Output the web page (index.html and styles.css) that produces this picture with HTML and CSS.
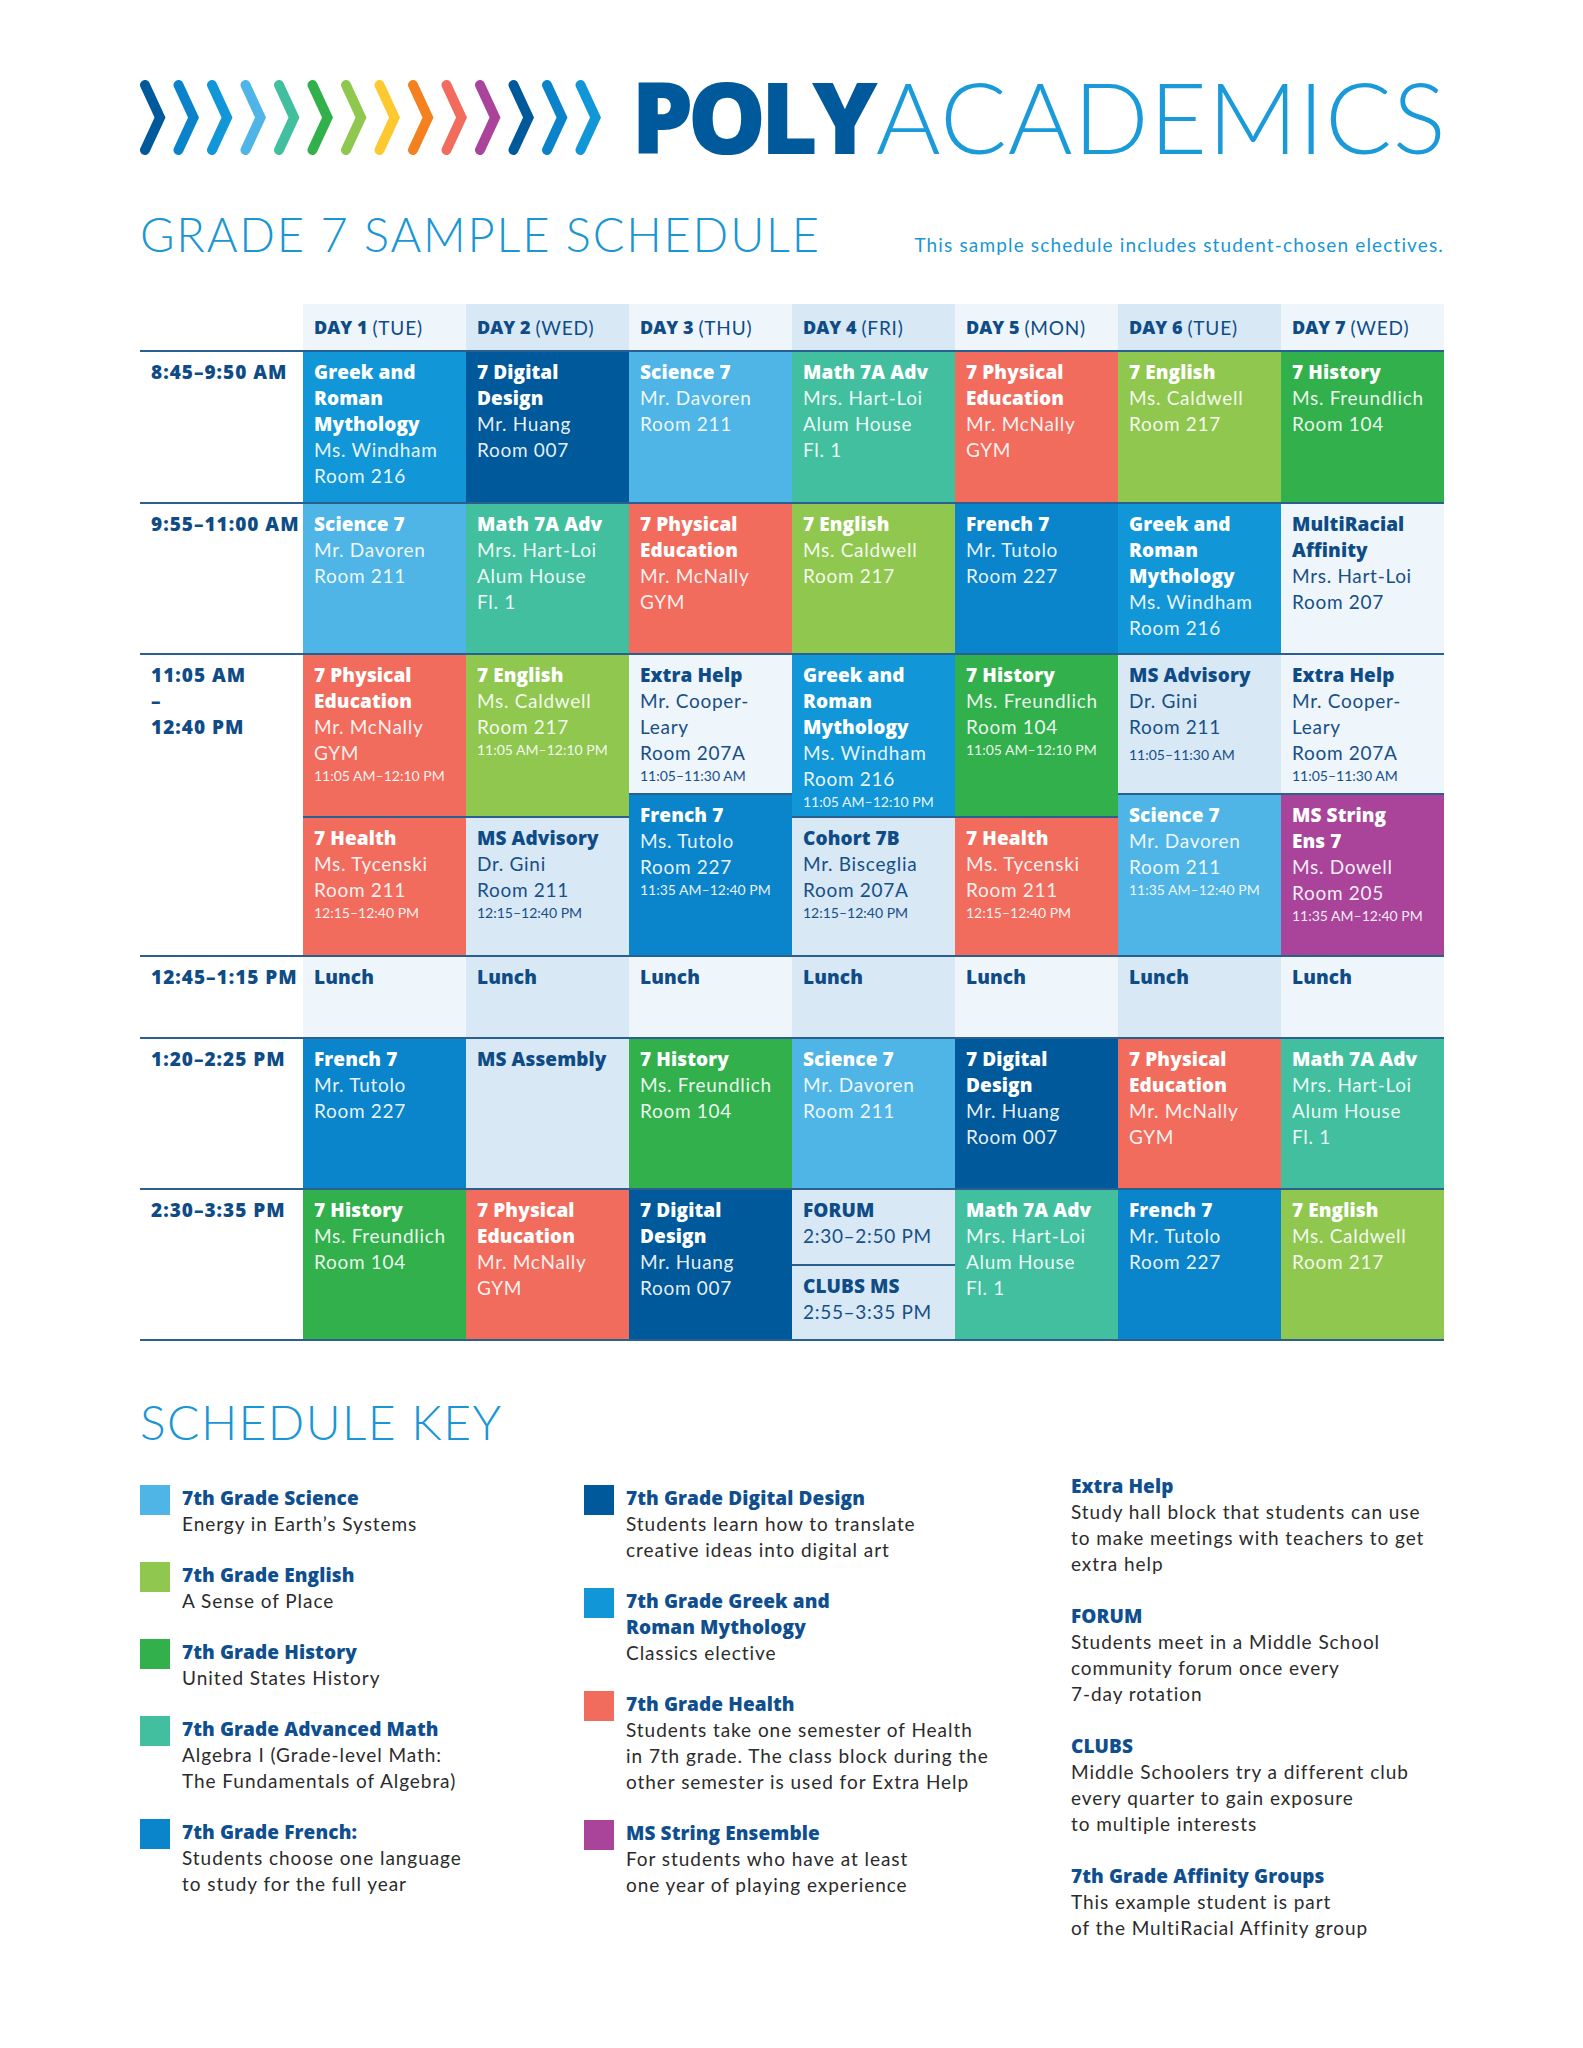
FILE: index.html
```html
<!DOCTYPE html>
<html lang="en">
<head>
<meta charset="utf-8">
<title>Poly Academics – Grade 7 Sample Schedule</title>
<link rel="stylesheet" href="styles.css">
</head>
<body>
<div class="page">
  <header class="logo">
    <svg class="chev" viewBox="0 0 470 75" width="470" height="75" aria-hidden="true">
      <g fill="none" stroke-width="10" stroke-linecap="round" stroke-linejoin="miter">
        <path d="M5 5 L20 37.5 L5 70" stroke="#00599b"/>
        <path d="M38.5 5 L53.5 37.5 L38.5 70" stroke="#0a83ca"/>
        <path d="M72 5 L87 37.5 L72 70" stroke="#1197d8"/>
        <path d="M105.5 5 L120.5 37.5 L105.5 70" stroke="#4eb5e6"/>
        <path d="M139 5 L154 37.5 L139 70" stroke="#42bf9f"/>
        <path d="M172.5 5 L187.5 37.5 L172.5 70" stroke="#31b04b"/>
        <path d="M206 5 L221 37.5 L206 70" stroke="#8fc74f"/>
        <path d="M239.5 5 L254.5 37.5 L239.5 70" stroke="#fcc931"/>
        <path d="M273 5 L288 37.5 L273 70" stroke="#f48120"/>
        <path d="M306.5 5 L321.5 37.5 L306.5 70" stroke="#f26c5e"/>
        <path d="M340 5 L355 37.5 L340 70" stroke="#a9449a"/>
        <path d="M373.5 5 L388.5 37.5 L373.5 70" stroke="#00599b"/>
        <path d="M407 5 L422 37.5 L407 70" stroke="#0a83ca"/>
        <path d="M440.5 5 L455.5 37.5 L440.5 70" stroke="#1197d8"/>
      </g>
    </svg>
    <div class="wordmark"><span class="poly">POLY</span><span class="acad">ACADEMICS</span></div>
  </header>

  <div class="title-row">
    <h1>GRADE 7 SAMPLE SCHEDULE</h1>
    <p>This sample schedule includes student-chosen electives.</p>
  </div>

  <div class="sched">
    <div class="row head">
      <div class="time"></div>
      <div class="hd odd"><b>DAY 1</b> (TUE)</div>
      <div class="hd even"><b>DAY 2</b> (WED)</div>
      <div class="hd odd"><b>DAY 3</b> (THU)</div>
      <div class="hd even"><b>DAY 4</b> (FRI)</div>
      <div class="hd odd"><b>DAY 5</b> (MON)</div>
      <div class="hd even"><b>DAY 6</b> (TUE)</div>
      <div class="hd odd"><b>DAY 7</b> (WED)</div>
    </div>

    <div class="row r-std r1">
      <div class="time">8:45–9:50 AM</div>
      <div class="cell greek"><b>Greek and<br>Roman<br>Mythology</b><span>Ms. Windham</span><span>Room 216</span></div>
      <div class="cell dd"><b>7 Digital<br>Design</b><span>Mr. Huang</span><span>Room 007</span></div>
      <div class="cell sci"><b>Science 7</b><span>Mr. Davoren</span><span>Room 211</span></div>
      <div class="cell math"><b>Math 7A Adv</b><span>Mrs. Hart-Loi</span><span>Alum House</span><span>Fl. 1</span></div>
      <div class="cell pe"><b>7 Physical<br>Education</b><span>Mr. McNally</span><span>GYM</span></div>
      <div class="cell eng"><b>7 English</b><span>Ms. Caldwell</span><span>Room 217</span></div>
      <div class="cell hist"><b>7 History</b><span>Ms. Freundlich</span><span>Room 104</span></div>
    </div>

    <div class="row r-std r2">
      <div class="time">9:55–11:00 AM</div>
      <div class="cell sci"><b>Science 7</b><span>Mr. Davoren</span><span>Room 211</span></div>
      <div class="cell math"><b>Math 7A Adv</b><span>Mrs. Hart-Loi</span><span>Alum House</span><span>Fl. 1</span></div>
      <div class="cell pe"><b>7 Physical<br>Education</b><span>Mr. McNally</span><span>GYM</span></div>
      <div class="cell eng"><b>7 English</b><span>Ms. Caldwell</span><span>Room 217</span></div>
      <div class="cell fr"><b>French 7</b><span>Mr. Tutolo</span><span>Room 227</span></div>
      <div class="cell greek"><b>Greek and<br>Roman<br>Mythology</b><span>Ms. Windham</span><span>Room 216</span></div>
      <div class="cell odd"><b>MultiRacial<br>Affinity</b><span>Mrs. Hart-Loi</span><span>Room 207</span></div>
    </div>

    <div class="row r3">
      <div class="time">11:05 AM<br>–<br>12:40 PM</div>
      <div class="split long">
        <div class="cell pe"><b>7 Physical<br>Education</b><span>Mr. McNally</span><span>GYM</span><small>11:05 AM–12:10 PM</small></div>
        <div class="cell pe"><b>7 Health</b><span>Ms. Tycenski</span><span>Room 211</span><small>12:15–12:40 PM</small></div>
      </div>
      <div class="split long">
        <div class="cell eng"><b>7 English</b><span>Ms. Caldwell</span><span>Room 217</span><small>11:05 AM–12:10 PM</small></div>
        <div class="cell even"><b>MS Advisory</b><span>Dr. Gini</span><span>Room 211</span><small>12:15–12:40 PM</small></div>
      </div>
      <div class="split short">
        <div class="cell odd"><b>Extra Help</b><span>Mr. Cooper-</span><span>Leary</span><span>Room 207A</span><small>11:05–11:30 AM</small></div>
        <div class="cell fr"><b>French 7</b><span>Ms. Tutolo</span><span>Room 227</span><small>11:35 AM–12:40 PM</small></div>
      </div>
      <div class="split long">
        <div class="cell greek"><b>Greek and<br>Roman<br>Mythology</b><span>Ms. Windham</span><span>Room 216</span><small>11:05 AM–12:10 PM</small></div>
        <div class="cell even"><b>Cohort 7B</b><span>Mr. Bisceglia</span><span>Room 207A</span><small>12:15–12:40 PM</small></div>
      </div>
      <div class="split long">
        <div class="cell hist"><b>7 History</b><span>Ms. Freundlich</span><span>Room 104</span><small>11:05 AM–12:10 PM</small></div>
        <div class="cell pe"><b>7 Health</b><span>Ms. Tycenski</span><span>Room 211</span><small>12:15–12:40 PM</small></div>
      </div>
      <div class="split short">
        <div class="cell even"><b>MS Advisory</b><span>Dr. Gini</span><span>Room 211</span><small class="gap">11:05–11:30 AM</small></div>
        <div class="cell sci"><b>Science 7</b><span>Mr. Davoren</span><span>Room 211</span><small>11:35 AM–12:40 PM</small></div>
      </div>
      <div class="split short">
        <div class="cell odd"><b>Extra Help</b><span>Mr. Cooper-</span><span>Leary</span><span>Room 207A</span><small>11:05–11:30 AM</small></div>
        <div class="cell str"><b>MS String<br>Ens 7</b><span>Ms. Dowell</span><span>Room 205</span><small>11:35 AM–12:40 PM</small></div>
      </div>
    </div>

    <div class="row lunch">
      <div class="time">12:45–1:15 PM</div>
      <div class="cell odd"><b>Lunch</b></div>
      <div class="cell even"><b>Lunch</b></div>
      <div class="cell odd"><b>Lunch</b></div>
      <div class="cell even"><b>Lunch</b></div>
      <div class="cell odd"><b>Lunch</b></div>
      <div class="cell even"><b>Lunch</b></div>
      <div class="cell odd"><b>Lunch</b></div>
    </div>

    <div class="row r-std r5">
      <div class="time">1:20–2:25 PM</div>
      <div class="cell fr"><b>French 7</b><span>Mr. Tutolo</span><span>Room 227</span></div>
      <div class="cell even"><b>MS Assembly</b></div>
      <div class="cell hist"><b>7 History</b><span>Ms. Freundlich</span><span>Room 104</span></div>
      <div class="cell sci"><b>Science 7</b><span>Mr. Davoren</span><span>Room 211</span></div>
      <div class="cell dd"><b>7 Digital<br>Design</b><span>Mr. Huang</span><span>Room 007</span></div>
      <div class="cell pe"><b>7 Physical<br>Education</b><span>Mr. McNally</span><span>GYM</span></div>
      <div class="cell math"><b>Math 7A Adv</b><span>Mrs. Hart-Loi</span><span>Alum House</span><span>Fl. 1</span></div>
    </div>

    <div class="row r-std r6">
      <div class="time">2:30–3:35 PM</div>
      <div class="cell hist"><b>7 History</b><span>Ms. Freundlich</span><span>Room 104</span></div>
      <div class="cell pe"><b>7 Physical<br>Education</b><span>Mr. McNally</span><span>GYM</span></div>
      <div class="cell dd"><b>7 Digital<br>Design</b><span>Mr. Huang</span><span>Room 007</span></div>
      <div class="split half">
        <div class="cell even"><b>FORUM</b><span>2:30–2:50 PM</span></div>
        <div class="cell even"><b>CLUBS MS</b><span>2:55–3:35 PM</span></div>
      </div>
      <div class="cell math"><b>Math 7A Adv</b><span>Mrs. Hart-Loi</span><span>Alum House</span><span>Fl. 1</span></div>
      <div class="cell fr"><b>French 7</b><span>Mr. Tutolo</span><span>Room 227</span></div>
      <div class="cell eng"><b>7 English</b><span>Ms. Caldwell</span><span>Room 217</span></div>
    </div>
  </div>

  <section class="key">
    <h2>SCHEDULE KEY</h2>
    <div class="key-cols">
      <div class="kcol">
        <div class="kitem"><i class="sw sci"></i><div><b>7th Grade Science</b><p>Energy in Earth’s Systems</p></div></div>
        <div class="kitem"><i class="sw eng"></i><div><b>7th Grade English</b><p>A Sense of Place</p></div></div>
        <div class="kitem"><i class="sw hist"></i><div><b>7th Grade History</b><p>United States History</p></div></div>
        <div class="kitem"><i class="sw math"></i><div><b>7th Grade Advanced Math</b><p>Algebra I (Grade-level Math:<br>The Fundamentals of Algebra)</p></div></div>
        <div class="kitem"><i class="sw fr"></i><div><b>7th Grade French:</b><p>Students choose one language<br>to study for the full year</p></div></div>
      </div>
      <div class="kcol">
        <div class="kitem"><i class="sw dd"></i><div><b>7th Grade Digital Design</b><p>Students learn how to translate<br>creative ideas into digital art</p></div></div>
        <div class="kitem"><i class="sw greek"></i><div><b>7th Grade Greek and<br>Roman Mythology</b><p>Classics elective</p></div></div>
        <div class="kitem"><i class="sw pe"></i><div><b>7th Grade Health</b><p>Students take one semester of Health<br>in 7th grade. The class block during the<br>other semester is used for Extra Help</p></div></div>
        <div class="kitem"><i class="sw str"></i><div><b>MS String Ensemble</b><p>For students who have at least<br>one year of playing experience</p></div></div>
      </div>
      <div class="kcol plain">
        <div class="kitem"><div><b>Extra Help</b><p>Study hall block that students can use<br>to make meetings with teachers to get<br>extra help</p></div></div>
        <div class="kitem"><div><b>FORUM</b><p>Students meet in a Middle School<br>community forum once every<br>7-day rotation</p></div></div>
        <div class="kitem"><div><b>CLUBS</b><p>Middle Schoolers try a different club<br>every quarter to gain exposure<br>to multiple interests</p></div></div>
        <div class="kitem"><div><b>7th Grade Affinity Groups</b><p>This example student is part<br>of the MultiRacial Affinity group</p></div></div>
      </div>
    </div>
  </section>
</div>
</body>
</html>
```

FILE: styles.css
```css
* { box-sizing: border-box; }
body {
  margin: 0;
  background: #ffffff;
  font-family: Lato, "Open Sans", "Liberation Sans", sans-serif;
  color: #2b2b2b;
}
.page {
  width: 1304px;
  margin-left: 140px;
  padding-top: 80px;
  padding-bottom: 110px;
}

/* Logo */
.logo {
  display: flex;
  align-items: center;
  height: 75px;
}
.chev { flex: none; display: block; }
.wordmark {
  margin-left: 21px;
  font-size: 99px;
  line-height: 75px;
  white-space: nowrap;
  position: relative;
  top: -2px;
}
.poly {
  font-family: "Open Sans", Lato, sans-serif;
  font-weight: 800;
  color: #00599b;
  letter-spacing: -6px;
  margin-right: 4px;
}
.acad { font-weight: 300; color: #1a9ad9; letter-spacing: 0.8px; }

/* Title */
.title-row {
  display: flex;
  align-items: baseline;
  justify-content: space-between;
  margin-top: 54px;
}
.title-row h1 {
  margin: 0;
  font-size: 47px;
  line-height: 50px;
  font-weight: 300;
  letter-spacing: 1.8px;
  color: #1a96d4;
}
.title-row p {
  margin: 0;
  font-size: 19px;
  letter-spacing: 1.15px;
  color: #1a96d4;
}

/* Schedule */
.sched {
  margin-top: 45px;
  border-bottom: 2px solid #29608f;
}
.row {
  display: flex;
}
.row > * { width: 163px; flex: none; }
.head { height: 46px; }
.r-std, .r3, .lunch { border-top: 2px solid #29608f; }
.r1 { height: 152px; }
.r2 { height: 151px; }
.r3 { height: 302px; }
.lunch { height: 82px; }
.r5 { height: 151px; }
.r6 { height: 151px; }

.hd {
  display: flex;
  align-items: center;
  padding-left: 11px;
  font-size: 19px;
  letter-spacing: 0.8px;
  color: #0f4c86;
  white-space: nowrap;
}
.hd b {
  font-family: "Open Sans", Lato, sans-serif;
  font-weight: 800;
  font-size: 18px;
  letter-spacing: 0;
  margin-right: 5px;
}

.time {
  padding: 7px 0 0 11px;
  font-family: "Open Sans", Lato, sans-serif;
  font-size: 19px;
  line-height: 26px;
  font-weight: 800;
  letter-spacing: 1px;
  color: #0f4c86;
  white-space: nowrap;
}
.head .time { padding: 0; }

.cell {
  padding: 7px 4px 0 11px;
  font-size: 19px;
  line-height: 26px;
  letter-spacing: 0.7px;
  color: rgba(255,255,255,0.92);
  white-space: nowrap;
  overflow: hidden;
}
.cell b {
  display: block;
  font-family: "Open Sans", Lato, sans-serif;
  font-size: 19px;
  font-weight: 800;
  letter-spacing: 0.1px;
  color: #ffffff;
}
.cell span { display: block; }
.cell small { display: block; font-size: 14px; line-height: 20px; letter-spacing: 0; }
.cell small.gap { margin-top: 5px; }

.greek { background: #1197d8; }
.dd { background: #00599b; }
.sci { background: #4eb5e6; }
.math { background: #42bf9f; }
.pe { background: #f26c5e; }
.eng { background: #8fc74f; }
.hist { background: #31b04b; }
.fr { background: #0a84cb; }
.str { background: #a9449a; }
.odd { background: #eef5fb; }
.even { background: #d8e8f5; }
.cell.odd, .cell.even { color: #174f87; }
.cell.odd b, .cell.even b { color: #0f4c86; }

.split { display: flex; flex-direction: column; }
.split > .cell:first-child { border-bottom: 2px solid #29608f; }
.long > .cell:first-child { height: 163px; }
.short > .cell:first-child { height: 140px; }
.half > .cell:first-child { height: 76px; }
.split > .cell:last-child { flex: 1; }

/* Key */
.key { margin-top: 56px; }
.key h2 {
  margin: 0;
  font-size: 48px;
  line-height: 50px;
  font-weight: 300;
  letter-spacing: 1.4px;
  color: #1a96d4;
}
.key-cols {
  display: grid;
  grid-template-columns: 444px 487px auto;
  margin-top: 38px;
}
.kcol { display: flex; flex-direction: column; gap: 25px; }
.kcol.plain { margin-top: -12px; gap: 26px; }
.kitem { display: flex; gap: 12px; }
.sw { display: block; flex: none; width: 30px; height: 30px; }
.kitem b {
  display: block;
  font-family: "Open Sans", Lato, sans-serif;
  font-size: 19px;
  line-height: 26px;
  font-weight: 800;
  letter-spacing: 0.1px;
  color: #0f4f8f;
}
.kitem p {
  margin: 0;
  font-size: 19px;
  line-height: 26px;
  letter-spacing: 0.95px;
  color: #2b2b2b;
  white-space: nowrap;
}
```
